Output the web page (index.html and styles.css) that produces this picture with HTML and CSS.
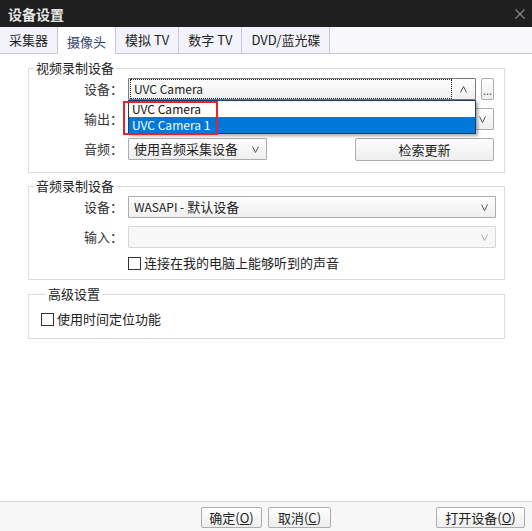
FILE: index.html
```html
<!DOCTYPE html>
<html lang="zh-CN">
<head>
<meta charset="UTF-8">
<meta name="viewport" content="width=device-width, initial-scale=1.0">
<title>设备设置</title>
<link rel="stylesheet" href="styles.css">
</head>
<body>
<div class="titlebar">
  <span class="title">设备设置</span>
  <svg class="close" width="10" height="10" viewBox="0 0 10 10"><path d="M0.5 0.5L9.5 9.5M9.5 0.5L0.5 9.5" stroke="#8c8c8c" stroke-width="1.1"/></svg>
</div>

<div class="tabs">
  <div class="tab">采集器</div>
  <div class="tab active">摄像头</div>
  <div class="tab">模拟 TV</div>
  <div class="tab">数字 TV</div>
  <div class="tab">DVD/蓝光碟</div>
</div>

<div class="content">
  <fieldset class="group group-video">
    <legend>视频录制设备</legend>
    <div class="form">
      <label>设备：</label>
      <div class="field">
        <div class="combo combo-device focused">
          <span class="combo-text"><span class="latin">UVC Camera</span></span>
          <span class="combo-arrow"><svg width="7" height="7" viewBox="0 0 7 7"><polyline points="0.5,6.5 3.5,0.5 6.5,6.5" fill="none" stroke="#555" stroke-width="1"/></svg></span>
          <ul class="dropdown">
            <li>UVC Camera</li>
            <li class="selected">UVC Camera 1</li>
          </ul>
          <div class="highlight"></div>
        </div>
        <button class="btn btn-more">...</button>
      </div>

      <label>输出：</label>
      <div class="field">
        <div class="combo">
          <span class="combo-text"></span>
          <span class="combo-arrow"><svg width="7" height="7" viewBox="0 0 7 7"><polyline points="0.5,0.5 3.5,6.5 6.5,0.5" fill="none" stroke="#555" stroke-width="1"/></svg></span>
        </div>
      </div>

      <label>音频：</label>
      <div class="field split">
        <div class="combo combo-audio">
          <span class="combo-text">使用音频采集设备</span>
          <span class="combo-arrow"><svg width="7" height="7" viewBox="0 0 7 7"><polyline points="0.5,0.5 3.5,6.5 6.5,0.5" fill="none" stroke="#555" stroke-width="1"/></svg></span>
        </div>
        <button class="btn btn-search">检索更新</button>
      </div>
    </div>
  </fieldset>

  <fieldset class="group group-audio">
    <legend>音频录制设备</legend>
    <div class="form">
      <label>设备：</label>
      <div class="field">
        <div class="combo">
          <span class="combo-text"><span class="latin">WASAPI -</span> 默认设备</span>
          <span class="combo-arrow"><svg width="7" height="7" viewBox="0 0 7 7"><polyline points="0.5,0.5 3.5,6.5 6.5,0.5" fill="none" stroke="#555" stroke-width="1"/></svg></span>
        </div>
      </div>

      <label>输入：</label>
      <div class="field">
        <div class="combo disabled">
          <span class="combo-text"></span>
          <span class="combo-arrow"><svg width="7" height="7" viewBox="0 0 7 7"><polyline points="0.5,0.5 3.5,6.5 6.5,0.5" fill="none" stroke="#aaa" stroke-width="1"/></svg></span>
        </div>
      </div>

      <span></span>
      <div class="check-row">
        <span class="checkbox"></span>连接在我的电脑上能够听到的声音
      </div>
    </div>
  </fieldset>

  <fieldset class="group group-advanced">
    <legend>高级设置</legend>
    <div class="check-row">
      <span class="checkbox"></span>使用时间定位功能
    </div>
  </fieldset>
</div>

<div class="footer">
  <span></span>
  <div class="footer-center">
    <button class="btn btn-ok">确定(<u>O</u>)</button>
    <button class="btn btn-cancel">取消(<u>C</u>)</button>
  </div>
  <button class="btn btn-open">打开设备(<u>O</u>)</button>
</div>
</body>
</html>
```

FILE: styles.css
```css
html, body {
  height: 100%;
}

body {
  margin: 0;
  display: flex;
  flex-direction: column;
  background-color: #fff;
  font-family: "Noto Sans CJK SC", "Noto Sans", sans-serif;
  font-size: 13px;
  color: #222;
}

.latin {
  font-size: 12px;
}

/* title bar */
.titlebar {
  height: 27px;
  flex: none;
  display: flex;
  align-items: center;
  justify-content: space-between;
  padding: 0 7px 0 8px;
  background-color: #1f1f1f;
}

.title {
  color: #e6e6e6;
  font-size: 14px;
  font-weight: bold;
  line-height: 20px;
}

.close {
  display: block;
}

/* tabs */
.tabs {
  height: 26px;
  flex: none;
  display: flex;
  background-color: #f7f7fc;
  border-bottom: 1px solid #c6c6d4;
}

.tab {
  padding: 0 9px;
  line-height: 26px;
  background-color: #f3f4fb;
  border-right: 1px solid #c6c6d4;
  color: #222;
}

.tab.active {
  height: 27px;
  line-height: 29px;
  background-color: #fff;
  color: #34466b;
}

/* main area */
.content {
  flex: 1;
  padding: 6px 27px 0 28px;
}

.group {
  margin: 0 0 5px;
  padding: 2px 10px 11px 0;
  border: 1px solid #dcdcdc;
  min-width: 0;
}

.group legend {
  margin-left: 5px;
  padding: 0 2px;
  line-height: 16px;
  color: #222;
}

.group-audio {
  padding-right: 8px;
  padding-bottom: 6px;
}

.group-advanced {
  margin-top: 6px;
  padding: 7px 10px 9px 12px;
}

.form {
  display: grid;
  grid-template-columns: 94px minmax(0, 1fr);
  column-gap: 5px;
  row-gap: 8px;
}

.form label {
  text-align: right;
  line-height: 22px;
  color: #333;
}

.field {
  display: flex;
  gap: 5px;
}

.field.split {
  justify-content: space-between;
}

/* combobox */
.combo {
  position: relative;
  flex: 1;
  height: 22px;
  box-sizing: border-box;
  display: flex;
  align-items: center;
  border: 1px solid #adadad;
  border-radius: 1px;
  background: linear-gradient(#fefefe, #efefef);
}

.combo-text {
  flex: 1;
  padding-left: 5px;
  line-height: 18px;
  white-space: nowrap;
}

.combo-arrow {
  width: 22px;
  display: flex;
  justify-content: center;
}

.combo-arrow svg {
  display: block;
}

.combo-device {
  flex: none;
  width: 348px;
  border-color: #7a7a7a;
}

.combo-device .combo-arrow {
  width: 23px;
}

.focused .combo-text {
  margin: 0 0 0 1px;
  padding-left: 3px;
  border: 1px dotted #222;
}

.combo-audio {
  flex: none;
  width: 139px;
}

.combo.disabled {
  border-color: #d6d6d6;
  background: #f7f7f7;
}

/* open list */
.dropdown {
  position: absolute;
  z-index: 2;
  left: -1px;
  top: calc(100% + 1px);
  width: calc(100% + 2px);
  box-sizing: border-box;
  margin: 0;
  padding: 0;
  list-style: none;
  background-color: #fff;
  border: 1px solid #1d3f66;
  box-shadow: 2px 2px 3px rgba(0, 0, 0, 0.35);
}

.dropdown li {
  padding-left: 3px;
  font-size: 12px;
  line-height: 16px;
  color: #111;
}

.dropdown li.selected {
  background-color: #0078d7;
  color: #fff;
}

.highlight {
  position: absolute;
  z-index: 3;
  left: -6px;
  top: 22px;
  width: 95px;
  height: 34px;
  box-sizing: border-box;
  border: 2px solid #e0262b;
}

/* buttons */
.btn {
  height: 22px;
  box-sizing: border-box;
  padding: 0 8px;
  border: 1px solid #adadad;
  border-radius: 2px;
  background: linear-gradient(#fdfdfd, #eeeeee);
  font-family: inherit;
  font-size: 13px;
  color: #222;
  line-height: 19px;
  white-space: nowrap;
}

.btn-more {
  width: 17px;
  padding: 0;
  font-size: 11px;
  line-height: 22px;
  color: #444;
}

.btn-search {
  width: 139px;
  height: 23px;
}

/* checkbox */
.check-row {
  display: flex;
  align-items: center;
  gap: 3px;
  height: 20px;
  line-height: 20px;
  color: #222;
}

.group-audio .check-row {
  margin-top: -3px;
}

.checkbox {
  width: 13px;
  height: 13px;
  box-sizing: border-box;
  border: 1px solid #333;
  background-color: #fff;
}

/* bottom bar */
.footer {
  flex: none;
  height: 30px;
  box-sizing: border-box;
  display: grid;
  grid-template-columns: 1fr auto 1fr;
  align-items: start;
  padding: 5px 7px 0;
  border-top: 1px solid #dcdcdc;
  background-color: #f7f7f7;
}

.footer-center {
  display: flex;
  gap: 6px;
}

.footer .btn {
  height: 21px;
  padding: 0;
}

.btn-ok {
  width: 61px;
}

.btn-cancel {
  width: 63px;
}

.btn-open {
  justify-self: end;
  width: 89px;
}
```
